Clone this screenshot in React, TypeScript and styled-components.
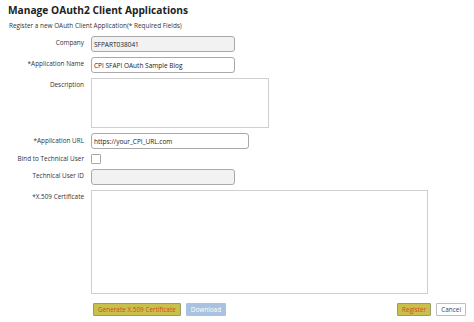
import * as React from "react";
import styled, { createGlobalStyle } from "styled-components";

const GlobalStyle = createGlobalStyle`
  body {
    margin: 0;
    background: #ffffff;
    font-family: "Open Sans", "Liberation Sans", sans-serif;
    color: #333333;
  }
`;

const App = () => {
  return (
    <Page>
      <GlobalStyle />
      <Title>Manage OAuth2 Client Applications</Title>
      <Subtitle>Register a new OAuth Client Application(* Required Fields)</Subtitle>
      <Form>
        <Label>Company</Label>
        <TextInput $width={144} $disabled value="SFPART038041" readOnly />

        <Label>*Application Name</Label>
        <TextInput $width={144} value="CPI SFAPI OAuth Sample Blog" readOnly />

        <Label>Description</Label>
        <TextArea $width={178} $height={50} readOnly />

        <Label $top={3}>*Application URL</Label>
        <TextInput $width={158} value="https://your_CPI_URL.com" readOnly />

        <Label $top={0}>Bind to Technical User</Label>
        <Checkbox />

        <Label>Technical User ID</Label>
        <TextInput $width={144} $disabled readOnly />

        <Label>*X.509 Certificate</Label>
        <TextArea $width={337} $height={104} readOnly />

        <span />
        <ButtonRow>
          <ButtonGroup>
            <Button $kind="primary">Generate X.509 Certificate</Button>
            <Button $kind="disabled">Download</Button>
          </ButtonGroup>
          <ButtonGroup>
            <Button $kind="primary">Register</Button>
            <Button $kind="plain">Cancel</Button>
          </ButtonGroup>
        </ButtonRow>
      </Form>
    </Page>
  );
};

export default App;

const Page = styled.div`
  width: 474px;
  height: 322px;
  padding: 3px 0 0 8px;
  box-sizing: border-box;
  overflow: hidden;
`;

const Title = styled.h1`
  margin: 0;
  font-size: 10.2px;
  font-weight: 700;
  line-height: 15px;
  color: #222222;
`;

const Subtitle = styled.div`
  margin-top: 3px;
  margin-left: 1px;
  font-size: 6.4px;
  line-height: 9px;
  color: #333333;
`;

const Form = styled.div`
  display: grid;
  grid-template-columns: 76px 1fr;
  column-gap: 7px;
  row-gap: 5px;
  margin-top: 6px;
  align-items: start;
`;

const Label = styled.div<{ $top?: number }>`
  text-align: right;
  font-size: 6.4px;
  line-height: 9px;
  padding-top: ${(p) => (p.$top ?? 2)}px;
  color: #333333;
  white-space: nowrap;
`;

const TextInput = styled.input<{ $width: number; $disabled?: boolean }>`
  width: ${(p) => p.$width}px;
  height: 16px;
  box-sizing: border-box;
  border: 1px solid #a9a9a9;
  border-radius: 3px;
  background: ${(p) => (p.$disabled ? "#f2f2f2" : "#ffffff")};
  padding: 0 2px;
  font-family: "Open Sans", "Liberation Sans", sans-serif;
  font-size: 6.5px;
  color: #222222;
  outline: none;
`;

const TextArea = styled.textarea<{ $width: number; $height: number }>`
  width: ${(p) => p.$width}px;
  height: ${(p) => p.$height}px;
  box-sizing: border-box;
  border: 1px solid #cfcfcf;
  border-radius: 0;
  background: #ffffff;
  resize: none;
  margin: 0;
  outline: none;
`;

const Checkbox = styled.span`
  display: block;
  width: 10px;
  height: 10px;
  box-sizing: border-box;
  border: 1px solid #a9a9a9;
  border-radius: 1px;
  background: #ffffff;
`;

const ButtonRow = styled.div`
  display: flex;
  justify-content: space-between;
  width: 375px;
  margin-top: 4px;
  padding-left: 2px;
  box-sizing: border-box;
`;

const ButtonGroup = styled.div`
  display: flex;
  gap: 5px;
`;

const buttonColors = {
  primary: { bg: "#c8c04c", fg: "#e2401c", border: "#9a9a6a" },
  disabled: { bg: "#a7c3e0", fg: "#ffffff", border: "#a7c3e0" },
  plain: { bg: "#ffffff", fg: "#444444", border: "#bdbdbd" },
};

const Button = styled.button<{ $kind: "primary" | "disabled" | "plain" }>`
  height: 13px;
  padding: 0 4px;
  box-sizing: border-box;
  border: 1px solid ${(p) => buttonColors[p.$kind].border};
  border-radius: 1px;
  background: ${(p) => buttonColors[p.$kind].bg};
  color: ${(p) => buttonColors[p.$kind].fg};
  font-family: "Open Sans", "Liberation Sans", sans-serif;
  font-size: 6.4px;
  line-height: 11px;
  white-space: nowrap;
`;
